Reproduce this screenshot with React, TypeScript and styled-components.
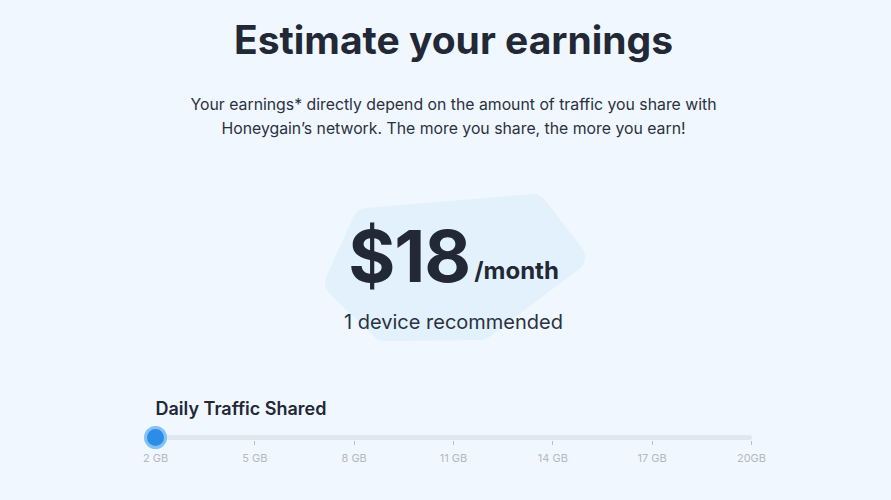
import React from 'react';
import styled, { createGlobalStyle } from 'styled-components';

const GlobalStyle = createGlobalStyle`
  html, body {
    margin: 0;
    padding: 0;
    background: #f0f7ff;
  }
  body {
    font-family: Inter, "Noto Sans", sans-serif;
    color: #1f2633;
  }
`;

const ticks = [2, 5, 8, 11, 14, 17, 20];

export default function App() {
    return (
        <>
            <GlobalStyle />
            <Page>
                <Title>Estimate your earnings</Title>
                <Lead>
                    Your earnings* directly depend on the amount of traffic you share with
                    <br />
                    Honeygain’s network. The more you share, the more you earn!
                </Lead>
                <PriceArea>
                    <Blob viewBox="0 0 280 165" aria-hidden>
                        <path
                            d="M52 38 L218 24 L255 72 L165 140 L70 141 L25 98 Z"
                            fill="#e2f1fc"
                            stroke="#e2f1fc"
                            strokeWidth="30"
                            strokeLinejoin="round"
                        />
                    </Blob>
                    <Price>
                        <Amount>$18</Amount>
                        <Per>/month</Per>
                    </Price>
                    <Devices>1 device recommended</Devices>
                </PriceArea>
                <Traffic>
                    <TrafficLabel>Daily Traffic Shared</TrafficLabel>
                    <Slider>
                        <Track />
                        <Thumb />
                    </Slider>
                    <Scale>
                        {ticks.map((t) => (
                            <Tick key={t}>
                                <Mark />
                                <TickLabel>{t === 20 ? '20GB' : `${t} GB`}</TickLabel>
                            </Tick>
                        ))}
                    </Scale>
                </Traffic>
            </Page>
        </>
    );
}

const Page = styled.div`
    width: 891px;
    height: 500px;
    box-sizing: border-box;
    padding-left: 16px;
    display: flex;
    flex-direction: column;
    align-items: center;
    overflow: hidden;
`;

const Title = styled.h1`
    margin: 15px 0 0;
    font-size: 39px;
    line-height: 50px;
    font-weight: 700;
    color: #222835;
`;

const Lead = styled.p`
    margin: 28px 0 0;
    font-size: 15.8px;
    line-height: 24px;
    text-align: center;
    color: #2b3140;
`;

const PriceArea = styled.div`
    position: relative;
    margin-top: 51px;
    width: 280px;
    height: 150px;
    display: flex;
    flex-direction: column;
    align-items: center;
`;

const Blob = styled.svg`
    position: absolute;
    left: 1px;
    top: -7px;
    width: 280px;
    height: 165px;
    overflow: visible;
`;

const Price = styled.div`
    position: relative;
    display: flex;
    align-items: baseline;
    margin-top: 22px;
`;

const Amount = styled.span`
    font-size: 72px;
    line-height: 84px;
    font-weight: 700;
    letter-spacing: -1px;
    color: #222835;
`;

const Per = styled.span`
    font-size: 24px;
    font-weight: 700;
    margin-left: 4px;
    transform: translateY(-3px);
    color: #222835;
`;

const Devices = styled.div`
    position: relative;
    margin-top: 12px;
    font-size: 20px;
    line-height: 24px;
    color: #2b3140;
`;

const Traffic = styled.div`
    width: 596px;
    margin-top: 56px;
    display: flex;
    flex-direction: column;
`;

const TrafficLabel = styled.div`
    font-size: 18px;
    line-height: 22px;
    font-weight: 600;
    color: #222835;
    margin-bottom: 15px;
`;

const Slider = styled.div`
    position: relative;
    height: 6px;
`;

const Track = styled.div`
    height: 5px;
    border-radius: 3px;
    background: #e0e7ef;
`;

const Thumb = styled.div`
    position: absolute;
    left: -12px;
    top: -9.5px;
    width: 17px;
    height: 17px;
    border-radius: 50%;
    background: #2b8de8;
    border: 3.5px solid #83c2f5;
`;

const Scale = styled.div`
    display: flex;
    justify-content: space-between;
`;

const Tick = styled.div`
    width: 0;
    display: flex;
    flex-direction: column;
    align-items: center;
`;

const Mark = styled.div`
    width: 1px;
    height: 4px;
    background: #b8bec6;
`;

const TickLabel = styled.div`
    margin-top: 6px;
    font-size: 11px;
    line-height: 14px;
    white-space: nowrap;
    color: #b3b9c1;
`;
